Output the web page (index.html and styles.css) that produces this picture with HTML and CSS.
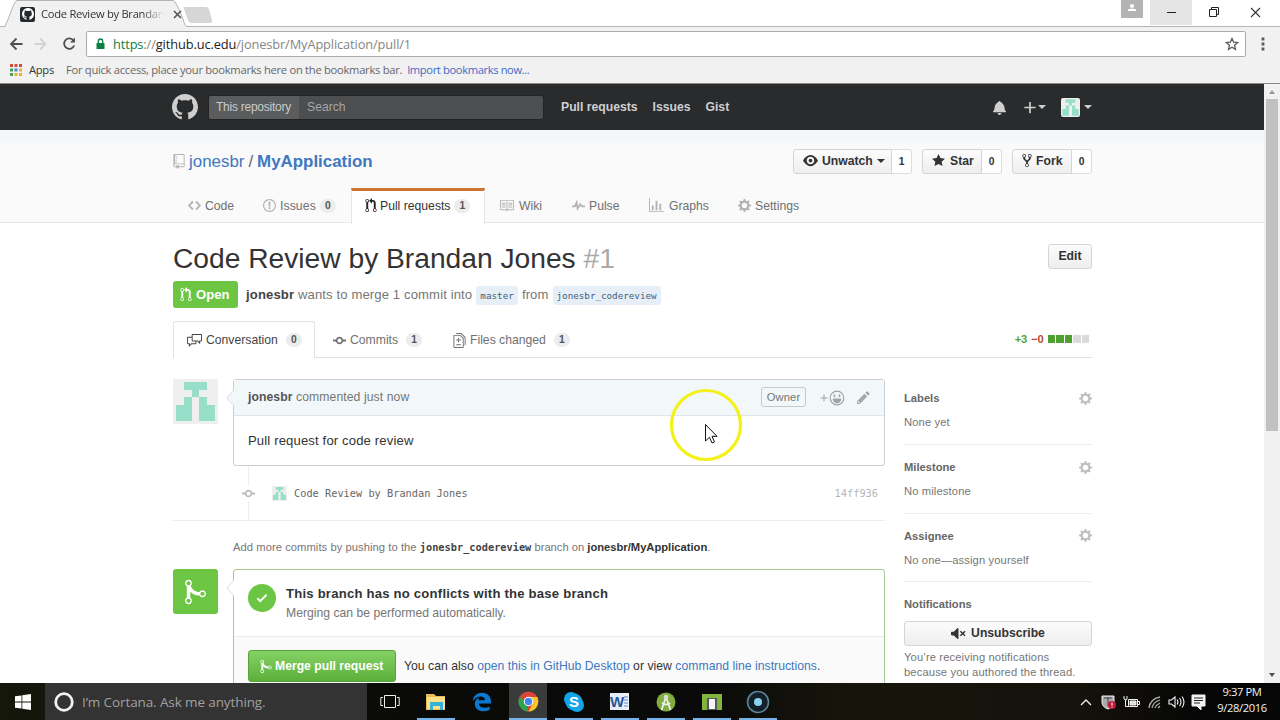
FILE: index.html
```html
<!DOCTYPE html>
<html lang="en">
<head>
<meta charset="utf-8">
<title>Code Review by Brandan Jones</title>
<link rel="stylesheet" href="styles.css">
</head>
<body>
<svg class="defs" width="0" height="0" aria-hidden="true">
  <symbol id="mark" viewBox="0 0 16 16"><path d="M8 0C3.58 0 0 3.58 0 8c0 3.54 2.29 6.53 5.47 7.59.4.07.55-.17.55-.38 0-.19-.01-.82-.01-1.49-2.01.37-2.53-.49-2.69-.94-.09-.23-.48-.94-.82-1.13-.28-.15-.68-.52-.01-.53.63-.01 1.08.58 1.23.82.72 1.21 1.87.87 2.33.66.07-.52.28-.87.51-1.07-1.78-.2-3.64-.89-3.64-3.95 0-.87.31-1.59.82-2.15-.08-.2-.36-1.02.08-2.12 0 0 .67-.21 2.2.82.64-.18 1.32-.27 2-.27.68 0 1.36.09 2 .27 1.53-1.04 2.2-.82 2.2-.82.44 1.1.16 1.92.08 2.12.51.56.82 1.27.82 2.15 0 3.07-1.87 3.75-3.65 3.95.29.25.54.73.54 1.48 0 1.07-.01 1.93-.01 2.2 0 .21.15.46.55.38A8.013 8.013 0 0 0 16 8c0-4.42-3.58-8-8-8z"/></symbol>
  <symbol id="pr" viewBox="0 0 12 16"><path d="M11 11.28V5c-.03-.78-.34-1.47-.94-2.06C9.46 2.35 8.78 2.03 8 2H7V0L4 3l3 3V4h1c.27.02.48.11.69.31.21.2.3.42.31.69v6.28A1.993 1.993 0 0 0 10 15a1.993 1.993 0 0 0 1-3.72zm-1 2.92c-.66 0-1.2-.55-1.2-1.2 0-.65.55-1.2 1.2-1.2.65 0 1.2.55 1.2 1.2 0 .65-.55 1.2-1.2 1.2zM4 3c0-1.11-.89-2-2-2a1.993 1.993 0 0 0-1 3.72v6.56A1.993 1.993 0 0 0 2 15a1.993 1.993 0 0 0 1-3.72V4.72c.59-.34 1-.98 1-1.72zm-.8 10c0 .66-.55 1.2-1.2 1.2-.65 0-1.2-.55-1.2-1.2 0-.65.55-1.2 1.2-1.2.65 0 1.2.55 1.2 1.2zM2 4.2C1.34 4.2.8 3.65.8 3c0-.65.55-1.2 1.2-1.2.65 0 1.2.55 1.2 1.2 0 .65-.55 1.2-1.2 1.2z"/></symbol>
  <symbol id="merge" viewBox="0 0 12 16"><path d="M10 7c-.73 0-1.38.41-1.73 1.02V8C7.22 7.98 6 7.64 5.14 6.98c-.75-.58-1.5-1.61-1.89-2.44A1.993 1.993 0 0 0 2 .99C.89.99 0 1.89 0 3a2 2 0 0 0 1 1.72v6.56c-.59.35-1 .99-1 1.72 0 1.11.89 2 2 2a1.993 1.993 0 0 0 1-3.72V7.67c.67.7 1.44 1.27 2.3 1.69.86.42 2.03.63 2.97.64v-.02c.36.61 1 1.02 1.73 1.02 1.11 0 2-.89 2-2 0-1.11-.89-2-2-2zm-6.8 6c0 .66-.55 1.2-1.2 1.2-.65 0-1.2-.55-1.2-1.2 0-.65.55-1.2 1.2-1.2.65 0 1.2.55 1.2 1.2zM2 4.2C1.34 4.2.8 3.65.8 3c0-.65.55-1.2 1.2-1.2.65 0 1.2.55 1.2 1.2 0 .65-.55 1.2-1.2 1.2zm8 6c-.66 0-1.2-.55-1.2-1.2 0-.65.55-1.2 1.2-1.2.65 0 1.2.55 1.2 1.2 0 .65-.55 1.2-1.2 1.2z"/></symbol>
  <symbol id="gear" viewBox="0 0 14 16"><path d="M14 8.77v-1.6l-1.94-.64-.45-1.09.88-1.84-1.13-1.13-1.81.91-1.09-.45-.69-1.92h-1.6l-.63 1.94-1.11.45-1.84-.88-1.13 1.13.91 1.81-.45 1.09L0 7.23v1.59l1.94.64.45 1.09-.88 1.84 1.13 1.13 1.81-.91 1.09.45.69 1.92h1.59l.63-1.94 1.11-.45 1.84.88 1.13-1.13-.92-1.81.47-1.09L14 8.75v.02zM7 11c-1.66 0-3-1.34-3-3s1.34-3 3-3 3 1.34 3 3-1.34 3-3 3z"/></symbol>
  <symbol id="code" viewBox="0 0 14 16"><path d="M9.5 3L8 4.5 11.5 8 8 11.5 9.5 13 14 8 9.5 3zm-5 0L0 8l4.5 5L6 11.5 2.5 8 6 4.5 4.5 3z"/></symbol>
  <symbol id="issue" viewBox="0 0 14 16"><path d="M7 2.3c3.14 0 5.7 2.56 5.7 5.7s-2.56 5.7-5.7 5.7A5.71 5.71 0 0 1 1.3 8c0-3.14 2.56-5.7 5.7-5.7zM7 1C3.14 1 0 4.14 0 8s3.14 7 7 7 7-3.14 7-7-3.14-7-7-7zm1 3H6v5h2V4zm0 6H6v2h2v-2z"/></symbol>
  <symbol id="book" viewBox="0 0 16 16"><path d="M3 5h4v1H3V5zm0 3h4V7H3v1zm0 2h4V9H3v1zm11-5h-4v1h4V5zm0 2h-4v1h4V7zm0 2h-4v1h4V9zm2-6v9c0 .55-.45 1-1 1H9.5l-1 1-1-1H2c-.55 0-1-.45-1-1V3c0-.55.45-1 1-1h5.5l1 1 1-1H15c.55 0 1 .45 1 1zm-8 .5L7.5 3H2v9h6V3.5zm7-.5H9.5l-.5.5V12h6V3z"/></symbol>
  <symbol id="pulse" viewBox="0 0 14 16"><path d="M11.5 8L8.8 5.4 6.6 8.5 5.5 1.6 2.38 8H0v2h3.6l.9-1.8.9 5.4L9 8.5l1.6 1.5H14V8z"/></symbol>
  <symbol id="graph" viewBox="0 0 16 16"><path d="M16 14v1H0V0h1v14h15zM5 13H3V8h2v5zm4 0H7V3h2v10zm4 0h-2V6h2v7z"/></symbol>
  <symbol id="eye" viewBox="0 0 16 16"><path d="M8.06 2C3 2 0 8 0 8s3 6 8.06 6C13 14 16 8 16 8s-3-6-7.94-6zM8 12c-2.2 0-4-1.78-4-4 0-2.2 1.8-4 4-4 2.22 0 4 1.8 4 4 0 2.22-1.78 4-4 4zm2-4c0 1.11-.89 2-2 2-1.11 0-2-.89-2-2 0-1.11.89-2 2-2 1.11 0 2 .89 2 2z"/></symbol>
  <symbol id="star" viewBox="0 0 14 16"><path d="M14 6l-4.9-.64L7 1 4.9 5.36 0 6l3.6 3.26L2.67 14 7 11.67 11.33 14l-.93-4.74z"/></symbol>
  <symbol id="fork" viewBox="0 0 10 16"><path d="M8 1a1.993 1.993 0 0 0-1 3.72V6L5 8 3 6V4.72A1.993 1.993 0 0 0 2 1a1.993 1.993 0 0 0-1 3.72V6.5l3 3v1.78A1.993 1.993 0 0 0 5 15a1.993 1.993 0 0 0 1-3.72V9.5l3-3V4.72A1.993 1.993 0 0 0 8 1zM2 4.2C1.34 4.2.8 3.65.8 3c0-.65.55-1.2 1.2-1.2.65 0 1.2.55 1.2 1.2 0 .65-.55 1.2-1.2 1.2zm3 10c-.66 0-1.2-.55-1.2-1.2 0-.65.55-1.2 1.2-1.2.65 0 1.2.55 1.2 1.2 0 .65-.55 1.2-1.2 1.2zm3-10c-.66 0-1.2-.55-1.2-1.2 0-.65.55-1.2 1.2-1.2.65 0 1.2.55 1.2 1.2 0 .65-.55 1.2-1.2 1.2z"/></symbol>
  <symbol id="repo" viewBox="0 0 12 16"><path d="M4 9H3V8h1v1zm0-3H3v1h1V6zm0-2H3v1h1V4zm0-2H3v1h1V2zm8-1v12c0 .55-.45 1-1 1H6v2l-1.5-1.5L3 16v-2H1c-.55 0-1-.45-1-1V1c0-.55.45-1 1-1h10c.55 0 1 .45 1 1zm-1 10H1v2h2v-1h3v1h5v-2zm0-10H2v9h9V1z"/></symbol>
  <symbol id="bell" viewBox="0 0 14 16"><path d="M14 12v1H0v-1l.73-.58c.77-.77.81-2.55 1.19-4.42C2.69 3.23 6 2 6 2c0-.55.45-1 1-1s1 .45 1 1c0 0 3.39 1.23 4.16 5 .38 1.88.42 3.66 1.19 4.42l.66.58H14zm-7 4c1.11 0 2-.89 2-2H5c0 1.11.89 2 2 2z"/></symbol>
  <symbol id="talk" viewBox="0 0 16 16"><path d="M15 1H6c-.55 0-1 .45-1 1v2H1c-.55 0-1 .45-1 1v6c0 .55.45 1 1 1h1v3l3-3h4c.55 0 1-.45 1-1V9h1l3 3V9h1c.55 0 1-.45 1-1V2c0-.55-.45-1-1-1zM9 11H4.5L3 12.5V11H1V5h4v3c0 .55.45 1 1 1h3v2zm6-3h-2v1.5L11.5 8H6V2h9v6z"/></symbol>
  <symbol id="commit" viewBox="0 0 14 16"><path d="M10.86 7c-.45-1.72-2-3-3.86-3-1.86 0-3.41 1.28-3.86 3H0v2h3.14c.45 1.72 2 3 3.86 3 1.86 0 3.41-1.28 3.86-3H14V7h-3.14zM7 10.2c-1.22 0-2.2-.98-2.2-2.2 0-1.22.98-2.2 2.2-2.2 1.22 0 2.2.98 2.2 2.2 0 1.22-.98 2.2-2.2 2.2z"/></symbol>
  <symbol id="diff" viewBox="0 0 13 16"><path d="M6 7h2v1H6v2H5V8H3V7h2V5h1v2zm-3 6h5v-1H3v1zM7.5 2L11 5.5V15c0 .55-.45 1-1 1H1c-.55 0-1-.45-1-1V3c0-.55.45-1 1-1h6.5zM10 6L7 3H1v12h9V6zM8.5 0H3v1h5l4 4v8h1V4.5L8.5 0z"/></symbol>
  <symbol id="pencil" viewBox="0 0 14 16"><path d="M0 12v3h3l8-8-3-3-8 8zm3 2H1v-2h1v1h1v1zm10.3-9.3L12 6 9 3l1.3-1.3a.996.996 0 0 1 1.41 0l1.59 1.59c.39.39.39 1.02 0 1.41z"/></symbol>
  <symbol id="mute" viewBox="0 0 16 16"><path d="M8 2.81v10.38c0 .67-.81 1-1.28.53L3 10H1c-.55 0-1-.45-1-1V7c0-.55.45-1 1-1h2l3.72-3.72C7.19 1.81 8 2.14 8 2.81zm7.53 3.22l-1.06-1.06-1.97 1.97-1.97-1.97-1.06 1.06L11.44 8 9.47 9.97l1.06 1.06 1.97-1.97 1.97 1.97 1.06-1.06L13.56 8l1.97-1.97z"/></symbol>
  <symbol id="check" viewBox="0 0 12 16"><path d="M12 5l-8 8-4-4 1.5-1.5L4 10l6.5-6.5z"/></symbol>
  <symbol id="plus" viewBox="0 0 12 16"><path d="M12 8.800H6.900V14H5.100V8.800H0V7.200h5.100V2h1.800v5.200H12z"/></symbol>
  <symbol id="identicon" viewBox="0 0 45 45"><path fill="#efefef" d="M0 0h45v45H0z"/><path fill="#98dfca" d="M11 3h23v8h-8v7h-7v-7h-8zM11 18h8v24H3V26h8zM26 18h8v8h8v16H26z"/></symbol>
</svg>

<header class="chrome">
  <div class="tabstrip">
    <svg class="tabshape" width="215" height="28" viewBox="0 0 215 28">
      <path d="M0 26.500H5Q8 20 12 9Q15 1 17 .5H173Q176 1 183 19Q185 26.500 187 26.500H215V28H0z" fill="#f1f1f1"/>
      <path d="M0 26.500H5Q8 20 12 9Q15 1 17 .5H173Q176 1 183 19Q185 26.500 187 26.500H215" fill="none" stroke="#b4b4b4"/>
      <path d="M184 7H206Q208 7 209 9L212 20Q213 23 210 23H192Q189 23 188 20L184 9Q183 7 184 7z" fill="#d6d6d6"/>
    </svg>
    <div class="tabcontent">
      <div class="favicon"><svg width="12" height="12"><use href="#mark"/></svg></div>
      <span class="tabtitle">Code Review by Brandan</span>
      <svg width="9" height="9" viewBox="0 0 9 9"><path d="M1 1l7 7M8 1L1 8" stroke="#555" stroke-width="1.600"/></svg>
    </div>
    <div class="winctl">
      <div class="user"><svg width="22" height="18" viewBox="0 0 22 18"><circle cx="11" cy="6" r="2" fill="#fff"/><path d="M7 11V10Q7 8.500 11 8.500T15 10V11z" fill="#fff"/></svg></div>
      <div class="min"><svg width="42" height="25"><path d="M17 12.500h9" stroke="#222"/></svg></div>
      <svg width="42" height="25" fill="none" stroke="#222"><path d="M17.500 9.500h7v7h-7zM19.500 9V7.500h7v7h-2"/></svg>
      <svg width="43" height="25" fill="none" stroke="#333" stroke-width="1.100"><path d="M17 8l9 9M26 8l-9 9"/></svg>
    </div>
  </div>
  <div class="toolbar">
    <svg class="nav" width="80" height="30" viewBox="0 0 80 30" fill="none" stroke-width="1.800">
      <path d="M22.500 17H11.500M16.500 11.500L11 17L16.500 22.500" stroke="#505050"/>
      <path d="M34.500 17H45M40 11.500L45.500 17L40 22.500" stroke="#d2d2d2"/>
      <path d="M73.500 13.500A5.200 5.200 0 1 0 74.200 18.500" stroke="#505050"/><path d="M75 10.500v5h-5z" fill="#505050"/>
    </svg>
    <div class="omnibox">
      <svg width="9" height="12" viewBox="0 0 9 12"><rect x=".5" y="5" width="8" height="6" rx=".5" fill="#0b8043"/><path d="M2.300 5V3.200a2.200 2.200 0 0 1 4.400 0V5" fill="none" stroke="#0b8043" stroke-width="1.300"/></svg>
      <span class="url"><b class="scheme">https</b>://<b class="host">github.uc.edu</b>/jonesbr/MyApplication/pull/1</span>
      <svg class="fav" width="14" height="14" viewBox="0 0 14 14"><path d="M7 1.500L8.600 5.200L12.700 5.600L9.600 8.300L10.500 12.300L7 10.200L3.500 12.300L4.400 8.300L1.300 5.600L5.400 5.200z" fill="none" stroke="#5a5a5a" stroke-width="1.300"/></svg>
    </div>
    <svg class="dots" width="6" height="16" viewBox="0 0 6 16"><path fill="#5a5a5a" d="M1.600 1.600h2.800v2.800H1.600zM1.600 6.600h2.800v2.800H1.600zM1.600 11.600h2.800v2.800H1.600z"/></svg>
  </div>
  <div class="bookmarks">
    <svg width="12" height="12" viewBox="0 0 12 12"><path fill="#d64b3f" d="M0 0h3v3H0zM4.500 0h3v3h-3zM9 0h3v3H9z"/><path fill="#47a35c" d="M0 4.500h3v3H0z"/><path fill="#4a86d8" d="M4.500 4.500h3v3h-3z"/><path fill="#e6b32f" d="M9 4.500h3v3H9zM4.500 9h3v3h-3zM9 9h3v3H9z"/><path fill="#47a35c" d="M0 9h3v3H0z"/></svg>
    <span class="apps">Apps</span>
    <span class="hint">For quick access, place your bookmarks here on the bookmarks bar.</span>
    <span class="import">Import bookmarks now...</span>
  </div>
</header>

<div class="viewport">
<div class="page">
  <div class="topbar"><div class="wrap topbar-in">
    <svg class="logo" width="26" height="26"><use href="#mark"/></svg>
    <div class="search"><span class="scope">This repository</span><span class="ph">Search</span></div>
    <nav class="topnav"><a class="t1">Pull requests</a><a class="t2">Issues</a><a class="t3">Gist</a></nav>
    <div class="usernav">
      <svg class="bell" width="13" height="15"><use href="#bell"/></svg>
      <svg class="plus" width="12" height="15"><use href="#plus"/></svg><i class="caret"></i>
      <svg class="face" width="19" height="19"><use href="#identicon"/></svg><i class="caret"></i>
    </div>
  </div></div>

  <div class="repohead"><div class="wrap">
    <div class="repotitle">
      <svg class="mut" width="12" height="15"><use href="#repo"/></svg>
      <h1><a class="owner">jonesbr</a><span class="slash">/</span><a class="name">MyApplication</a></h1>
      <div class="actions">
        <div class="pair"><span class="btn w1"><svg width="15" height="15"><use href="#eye"/></svg>Unwatch<i class="caret dark"></i></span><span class="cnt">1</span></div>
        <div class="pair"><span class="btn w2"><svg width="13" height="15"><use href="#star"/></svg>Star</span><span class="cnt">0</span></div>
        <div class="pair"><span class="btn w3"><svg width="10" height="15"><use href="#fork"/></svg>Fork</span><span class="cnt">0</span></div>
      </div>
    </div>
    <nav class="reponav">
      <a class="n1"><svg width="13" height="15"><use href="#code"/></svg>Code</a>
      <a class="n2"><svg width="13" height="15"><use href="#issue"/></svg>Issues<em>0</em></a>
      <a class="n3"><svg width="12" height="15"><use href="#pr"/></svg>Pull requests<em>1</em></a>
      <a class="n4"><svg width="15" height="15"><use href="#book"/></svg>Wiki</a>
      <a class="n5"><svg width="13" height="15"><use href="#pulse"/></svg>Pulse</a>
      <a class="n6"><svg width="15" height="15"><use href="#graph"/></svg>Graphs</a>
      <a class="n7"><svg width="13" height="15"><use href="#gear"/></svg>Settings</a>
    </nav>
  </div></div>

  <main class="wrap">
    <div class="titlerow"><h2><span class="ttl">Code Review by Brandan Jones</span> <span class="num">#1</span></h2><span class="btn edit">Edit</span></div>
    <div class="meta">
      <span class="state"><svg width="12" height="15"><use href="#pr"/></svg>Open</span>
      <span class="metatext"><b>jonesbr</b> wants to merge 1 commit into</span>
      <code class="ref r1">master</code><span class="from">from</span><code class="ref r2">jonesbr_codereview</code>
    </div>
    <nav class="prtabs">
      <a class="p1"><svg width="15" height="15"><use href="#talk"/></svg>Conversation<em>0</em></a>
      <a class="p2"><svg width="13" height="15"><use href="#commit"/></svg>Commits<em>1</em></a>
      <a class="p3"><svg width="13" height="15"><use href="#diff"/></svg>Files changed<em>1</em></a>
      <div class="diffstat"><b class="add">+3</b><b class="del">−0</b><span class="blocks"><i></i><i></i><i></i><i class="z"></i><i class="z"></i></span></div>
    </nav>

    <div class="cols">
      <div class="left">
        <div class="crow">
          <svg class="avatar" width="45" height="45"><use href="#identicon"/></svg>
          <div class="comment">
            <svg class="arrow" width="8" height="16" viewBox="0 0 8 16"><path d="M8 0L1 8l7 8" fill="#f2f8fa" stroke="#d5dfe4"/></svg>
            <div class="chead"><span class="who"><b>jonesbr</b> commented just now</span><span class="ownerlab">Owner</span>
              <svg class="smile" width="25" height="16" viewBox="0 0 25 16" fill="none" stroke="#9da5aa"><path d="M.5 8h7M4 4.500v7"/><circle cx="17" cy="8" r="6.800" stroke-width="1.200"/><path d="M13 9h8q-1 4-4 4t-4-4z" fill="#9da5aa"/><path d="M14.500 4.500v2.500M19.500 4.500v2.500" stroke-width="1.600"/></svg>
              <svg class="pen" width="13" height="15"><use href="#pencil"/></svg></div>
            <div class="cbody">Pull request for code review</div>
          </div>
        </div>
        <div class="commitrow">
          <div class="node"><svg width="13" height="15"><use href="#commit"/></svg></div>
          <svg class="mini" width="15" height="15"><use href="#identicon"/></svg>
          <code class="msg">Code Review by Brandan Jones</code><code class="sha">14ff936</code>
        </div>
        <p class="push"><span class="pa">Add more commits by pushing to the</span> <code>jonesbr_codereview</code> <span>branch on</span> <b>jonesbr/MyApplication</b>.</p>
        <div class="mrow">
          <div class="mergeicon"><svg width="23" height="28"><use href="#merge"/></svg></div>
          <div class="mergebox">
            <svg class="arrow" width="8" height="16" viewBox="0 0 8 16"><path d="M8 0L1 8l7 8" fill="#fff" stroke="#d3e4c9"/></svg>
            <div class="mstatus"><span class="ok"><svg width="12" height="14"><use href="#check"/></svg></span><div><h3>This branch has no conflicts with the base branch</h3><p>Merging can be performed automatically.</p></div></div>
            <div class="mact"><span class="mbtn"><svg width="12" height="15"><use href="#merge"/></svg>Merge pull request</span><span class="also">You can also <a>open this in GitHub Desktop</a> or view <a>command line instructions</a>.</span></div>
          </div>
        </div>
      </div>
      <aside>
        <section class="first"><h4>Labels<svg width="13" height="15"><use href="#gear"/></svg></h4><p>None yet</p></section>
        <section><h4>Milestone<svg width="13" height="15"><use href="#gear"/></svg></h4><p>No milestone</p></section>
        <section><h4>Assignee<svg width="13" height="15"><use href="#gear"/></svg></h4><p>No one—assign yourself</p></section>
        <section class="notif"><h4>Notifications</h4><span class="btn unsub"><svg width="15" height="15"><use href="#mute"/></svg>Unsubscribe</span><p class="why">You’re receiving notifications<br>because you authored the thread.</p></section>
      </aside>
    </div>
  </main>
</div>
<div class="scroll"><svg width="16" height="15" viewBox="0 0 16 15"><path d="M5 10l3-4 3 4z" fill="#999"/></svg><div class="thumb"></div><svg class="dn" width="16" height="15" viewBox="0 0 16 15"><path d="M5 5l3 4 3-4z" fill="#505050"/></svg></div>
</div>

<footer class="taskbar">
  <div class="start"><svg width="16" height="16" viewBox="0 0 16 16"><path fill="#fff" d="M0 2.300L6.500 1.400V7.600H0zM7.300 1.300L16 0V7.600H7.300zM0 8.400H6.500V14.600L0 13.700zM7.300 8.400H16V16L7.300 14.700z"/></svg></div>
  <div class="cortana"><svg width="20" height="20" viewBox="0 0 20 20"><circle cx="10" cy="10" r="8.300" fill="none" stroke="#f2f2f2" stroke-width="2.800"/></svg><span>I’m Cortana. Ask me anything.</span></div>
  <div class="task"><svg width="20" height="16" viewBox="0 0 20 16" fill="none" stroke="#eee"><path d="M4.500 1.500h11v12h-11zM3 3.500H.8v8H3M17 3.500h2.200v8H17"/></svg></div>
  <div class="task on"><svg width="22" height="20" viewBox="0 0 22 20"><path d="M1 2h8l2 2h9v14H1z" fill="#e9bd55"/><path d="M2 5h18v12H2z" fill="#fbe08a"/><path d="M5 10h13v8h-3v-4H8v4H5z" fill="#36b4d8"/></svg></div>
  <div class="task"><svg width="20" height="20" viewBox="0 0 20 20"><path d="M1 9C1 4 5 .8 10.300.8C15.500.8 19 4.500 19 9.500V11.500H6.800C7.200 16 13.500 17 17.500 14.500V18C11 21 2.800 19 2.800 11.800C2.800 9 4.500 6.500 7.500 5.300C6.700 6.300 6.500 7.300 6.500 8.200H13C13 3.500 5.500 2.800 1 9z" fill="#0b78d0"/></svg></div>
  <div class="task on active"><svg width="21" height="21" viewBox="0 0 21 21"><circle cx="10.500" cy="10.500" r="10" fill="#db4437"/><path d="M1.800 5.500L8 12L10.500 20.500A10 10 0 0 1 1.800 5.500z" fill="#2da24f"/><path d="M19.200 6H10.500L14.500 13L10.500 20.500A10 10 0 0 0 19.200 6z" fill="#f6c72b"/><circle cx="10.500" cy="10.500" r="4.700" fill="#fff"/><circle cx="10.500" cy="10.500" r="3.700" fill="#4285f4"/></svg></div>
  <div class="task on"><svg width="22" height="22" viewBox="0 0 22 22"><circle cx="8" cy="8" r="7" fill="#12a5e8"/><circle cx="14" cy="14" r="7" fill="#12a5e8"/><circle cx="11" cy="11" r="8.500" fill="#12a5e8"/><text x="11" y="16" text-anchor="middle" class="sk">S</text></svg></div>
  <div class="task on"><svg width="22" height="22" viewBox="0 0 22 22"><path d="M7 2h13v17H7z" fill="#eef3fa"/><path d="M15 6h4M15 9h4M15 12h4M15 15h4" stroke="#5b82c3"/><path d="M1 2h13v17H1z" fill="#e4ecf7"/><text x="8" y="16" text-anchor="middle" class="wd">W</text></svg></div>
  <div class="task on"><svg width="22" height="22" viewBox="0 0 22 22"><circle cx="11" cy="11" r="9.500" fill="#80ad3d"/><path d="M11 6L6.500 19M11 6l4.500 13M7 12q4 3 8 0" fill="none" stroke="#eee" stroke-width="1.800"/><circle cx="11" cy="6" r="2.300" fill="#dcdcdc"/></svg></div>
  <div class="task on"><svg width="22" height="22" viewBox="0 0 22 22"><path d="M1 3h20v16h-5V8H6v11H1z" fill="#82b53f"/><path d="M6 7h10v12H6z" fill="#555"/><path d="M8 8h6v10H8z" fill="#f4f4f4"/></svg></div>
  <div class="task on"><svg width="24" height="24" viewBox="0 0 24 24"><circle cx="12" cy="12" r="10.500" fill="#12202a" stroke="#5d8297" stroke-width="1.600"/><circle cx="12" cy="12" r="4" fill="#8bd1ee"/></svg></div>
  <div class="tray">
    <svg width="130" height="20" viewBox="0 0 130 20" fill="none" stroke="#f2f2f2">
      <path d="M2 13l5-5 5 5" stroke-width="1.300"/>
      <path d="M23 4h12v6q0 5-6 7q-6-2-6-7z" fill="#aaa"/><path d="M25 6h8M29 5v9" stroke="#444"/><circle cx="33" cy="13" r="4" fill="#c2183b" stroke="none"/><path d="M33 10.500v3M33 14.500v1" stroke-width="1.200"/>
      <path d="M49.500 7.500h9v7h-9zM59 9.500h1.500v3H59M45 4v3q3 2 3 0V4M46.500 8v6.500h3"/><path d="M51 9h6v4h-6z" fill="#ddd"/>
      <path d="M70 16q1-9 11-11M73 16q1-6 8-8M76 16q1-3 5-5M79 16l2-2" stroke="#aaa" stroke-width="1.300"/>
      <path d="M90 8h2.500l3.500-3v10l-3.500-3H90zM98 7.500q2 2.500 0 5M100.500 6q3 4 0 8M103 4.500q4 5.500 0 11" stroke-width="1.100"/>
      <path d="M113 3h13v11h-4v4l-4-4h-5z" fill="#f2f2f2"/><path d="M115 6h9M115 8.500h9M115 11h6" stroke="#222"/>
    </svg>
    <div class="clock"><span>9:37 PM</span><span>9/28/2016</span></div>
  </div>
</footer>

<svg class="pointer" width="76" height="76" viewBox="0 0 76 76"><circle cx="38" cy="38" r="34.500" fill="none" stroke="#f3f119" stroke-width="3.200"/><path d="M37.500 37.500v16.500l4-3.700l2.500 5.700l2.500-1l-2.500-5.700h5z" fill="#fff" stroke="#111"/></svg>
</body>
</html>
```

FILE: styles.css
```css
* { box-sizing: border-box; }
body { margin: 0; width: 1280px; height: 720px; overflow: hidden; display: flex; flex-direction: column; font: 13px/18px "Liberation Sans", Arial, sans-serif; color: #333; background: #fff; }
h1, h2, h3, h4, p { margin: 0; font-weight: normal; }
svg { display: block; flex: none; fill: currentColor; }
svg[fill="none"] { fill: none; }
span, a, b, code { white-space: nowrap; }
em, i { font-style: normal; }
.defs { position: absolute; }

/* browser chrome */
.chrome { height: 84px; flex: none; background: #f1f1f1; font-family: "Open Sans", "Noto Sans", sans-serif; border-bottom: 1px solid #888; }
.tabstrip { height: 27px; background: #fff; border-bottom: 1px solid #b4b4b4; position: relative; display: flex; }
.tabshape { position: absolute; left: 0; top: 0; }
.tabcontent { position: relative; display: flex; align-items: center; padding: 1px 0 0 20px; height: 27px; width: 200px; }
.favicon { width: 15px; height: 15px; border-radius: 2px; background: #24292e; color: #fff; display: flex; align-items: center; justify-content: center; }
.tabtitle { width: 123px; margin: 0 9px 0 6px; overflow: hidden; font-size: 11.2px; letter-spacing: -.28px; color: #333; -webkit-mask-image: linear-gradient(90deg, #000 82%, transparent); }
.winctl { margin-left: auto; display: flex; padding-right: 3px; }
.user { width: 22px; height: 18px; margin-right: 7px; background: #b3b3b3; }
.min { width: 42px; height: 25px; background: #e5e5e5; }
.toolbar { display: flex; height: 34px; }
.nav { margin-right: 6px; }
.omnibox { margin-top: 4px; width: 1160px; height: 26px; background: #fff; border: 1px solid #ababab; border-radius: 2px; display: flex; align-items: center; padding: 0 6px 0 9px; }
.url { margin-left: 8px; font-size: 12.8px; letter-spacing: -.11px; color: #858585; }
.url b { font-weight: normal; }
.url .scheme { color: #0b8043; }
.url .host { color: #222; }
.fav { margin-left: auto; }
.dots { margin: 9px 0 0 14px; }
.bookmarks { display: flex; align-items: center; height: 18px; padding-left: 10px; font-size: 11.2px; letter-spacing: -.28px; color: #666; }
.apps { color: #333; margin: 0 12px 0 7px; }
.import { color: #4569c4; margin-left: 5px; letter-spacing: -.38px; }

/* page frame */
.viewport { display: flex; height: 599px; flex: none; overflow: hidden; }
.page { width: 1264px; height: 599px; overflow: hidden; }
.scroll { width: 16px; background: #f1f1f1; display: flex; flex-direction: column; align-items: center; }
.thumb { width: 12px; height: 332px; background: #c1c1c1; }
.dn { margin-top: auto; }
.wrap { width: 919px; margin-left: 173px; }
.caret { display: inline-block; width: 0; height: 0; border: 4px solid transparent; border-top: 4px solid currentColor; border-bottom: 0; }

.topbar { height: 46px; background: #2a2b2d; color: #cfcfcf; }
.topbar-in { display: flex; align-items: center; height: 46px; }
.logo { margin: -1px 0 0 -1px; }
.search { margin-left: 10px; width: 336px; height: 25px; display: flex; background: #4c4e50; border: 1px solid #222; border-radius: 3px; line-height: 22px; font-size: 12px; overflow: hidden; }
.scope { width: 90px; padding-left: 7px; background: #5a5c5e; color: #c9cbcc; letter-spacing: -.25px; }
.ph { padding-left: 8px; color: #a4a6a8; font-size: 12.2px; }
.topnav { display: flex; font-weight: bold; font-size: 12.2px; padding: 0 0 1px 17px; gap: 15px; }
.usernav { margin-left: auto; display: flex; align-items: center; }
.plus { margin: 0 2px 0 18px; }
.face { margin: 0 4px 0 15px; border-radius: 2px; }

/* repository header */
.repohead { height: 93px; background: linear-gradient(#f5f6fa 0, #f5f6fa 11px, #fafafa 14px); border-bottom: 1px solid #e8e8e8; }
.repotitle { height: 58px; padding-top: 4px; display: flex; align-items: center; }
.repotitle h1 { display: flex; align-items: baseline; font-size: 16.9px; line-height: 20px; margin: 2px 0 0 4px; color: #4078c0; }
.slash { color: #666; margin: 0 4px; }
.name { font-weight: bold; }
.mut { color: #b5b5b5; }
.actions { margin-left: auto; display: flex; gap: 10px; }
.pair { display: flex; }
.btn { display: flex; align-items: center; height: 25px; border: 1px solid #d5d5d5; border-radius: 3px; background: linear-gradient(#fcfcfc, #eee); color: #333; font-weight: bold; font-size: 12.2px; }
.pair .btn { border-radius: 3px 0 0 3px; padding-bottom: 1px; }
.pair svg { margin-right: 4px; }
.w1 { width: 99px; padding-left: 9px; }
.w1 .caret { margin-left: 4px; }
.w2 { width: 60px; padding-left: 9px; }
.w2 svg { margin-right: 5px; }
.w3 { width: 60px; padding-left: 9px; }
.cnt { width: 20px; height: 25px; border: 1px solid #ddd; border-left: 0; border-radius: 0 3px 3px 0; background: #fff; font: bold 10.3px/24px "Liberation Sans", Arial, sans-serif; text-align: center; }
.reponav { display: flex; height: 35px; padding-left: 1px; }
.reponav a { display: flex; align-items: center; height: 35px; padding-left: 14px; color: #707070; font-size: 12.2px; }
.reponav svg { color: #b4b4b4; margin-right: 4px; }
em { display: block; min-width: 16px; height: 14px; border-radius: 8px; background: #ececec; color: #555; font: bold 10.3px/14px "Liberation Sans", Arial, sans-serif; text-align: center; }
.reponav em { margin-left: 4px; }
.n1 { width: 75px; }
.n2 { width: 102px; letter-spacing: .1px; }
.reponav .n3 { width: 134px; background: #fff; border: 1px solid #e5e5e5; border-top: 3px solid #cf7330; border-bottom: 0; padding: 0 0 4px 13px; color: #333; height: 36px; }
.reponav .n3 svg { color: #222; margin-right: 3px; }
.n4 { width: 73px; }
.n4 svg { margin-right: 5px; }
.n5 { width: 77px; }
.n6 { width: 89px; }
.n6 svg { margin-right: 5px; }

/* pull request header */
.titlerow { display: flex; justify-content: space-between; align-items: center; height: 36px; margin-top: 17px; }
h2 { font-size: 28.2px; line-height: 34px; white-space: nowrap; }
.num { color: #aaa; }
.edit { width: 44px; justify-content: center; margin-top: -3px; padding-bottom: 1px; }
.meta { display: flex; align-items: center; height: 27px; margin-top: 5px; font-size: 13.1px; color: #767676; }
.metatext { letter-spacing: .12px; }
.state { display: flex; align-items: center; width: 65px; height: 27px; background: #6cc644; border-radius: 3px; color: #fff; font-weight: bold; padding-left: 7px; margin-right: 8px; }
.state svg { margin-right: 4px; }
.meta b { color: #444; }
code { font-family: "DejaVu Sans Mono", monospace; }
.ref { background: #e6eff8; border-radius: 3px; height: 19px; padding: 0 4px; font-size: 9.3px; line-height: 19px; color: #44607a; margin-top: 2px; }
.r1 { margin-left: 4px; }
.from { margin: 0 4px; letter-spacing: .12px; }
.r2 { letter-spacing: -.04px; }
.prtabs { display: flex; align-items: center; height: 37px; margin-top: 13px; border-bottom: 1px solid #e2e2e2; font-size: 12.2px; color: #707070; }
.prtabs a { display: flex; align-items: center; height: 36px; padding-top: 2px; }
.prtabs svg { margin-right: 4px; }
.prtabs em { margin-left: 8px; }
.prtabs .p1 { width: 142px; height: 37px; margin-bottom: -1px; border: 1px solid #e2e2e2; border-bottom: 0; border-radius: 3px 3px 0 0; background: #fff; padding: 0 0 0 13px; color: #444; }
.p2 { width: 120px; padding-left: 18px; }
.p3 { padding-left: 18px; }
.diffstat { margin-left: auto; display: flex; align-items: center; gap: 4px; font-size: 11.2px; padding-right: 3px; }
.diffstat b { letter-spacing: -.2px; }
.add { color: #55a532; }
.del { color: #bd4c38; }
.blocks { display: flex; gap: 1px; }
.blocks i { width: 7.5px; height: 7.5px; background: #4fa030; }
.blocks .z { background: #dadada; }

/* discussion */
.cols { display: flex; justify-content: space-between; margin-top: 21px; }
.left { width: 712px; }
.crow, .mrow { display: flex; justify-content: space-between; }
.comment { position: relative; width: 652px; height: 87px; border: 1px solid #c9cfd2; border-radius: 3px; }
.arrow { position: absolute; left: -8px; top: 10px; }
.chead { display: flex; align-items: center; height: 36px; padding: 0 14px; background: #f2f8fa; border-bottom: 1px solid #dce6ec; color: #767676; font-size: 12.2px; }
.who { letter-spacing: .08px; margin-top: -2px; }
.chead b { color: #555; }
.ownerlab { margin: -1px 0 0 auto; width: 45px; height: 20px; border: 1px solid #c3c9cc; border-radius: 3px; font-size: 11.2px; line-height: 18px; text-align: center; letter-spacing: .1px; }
.smile { margin: 0 12px 0 14px; }
.pen { color: #a3a8ab; }
.cbody { padding: 16px 14px; font-size: 13.1px; letter-spacing: .14px; }
.commitrow { display: flex; align-items: center; height: 55px; border-bottom: 1px solid #ececec; padding-left: 69px; padding-right: 7px; }
.node { width: 13px; height: 54px; display: flex; align-items: center; background: linear-gradient(#eee, #eee) 6px 0/1px 100% no-repeat; color: #bbb; }
.node svg { background: #fff; }
.mini { margin: 0 7px 0 17px; }
.msg { font-size: 10.3px; color: #666; }
.sha { margin-left: auto; font-size: 10.3px; color: #b5b5b5; }
.push { height: 48px; padding: 17px 0 0 60px; font-size: 11.2px; color: #767676; white-space: nowrap; }
.pa { letter-spacing: .06px; }
.push code { font-weight: bold; font-size: 10.3px; color: #444; }
.push b { color: #333; }
.mergeicon { width: 45px; height: 45px; background: #6cc644; border-radius: 3px; display: flex; align-items: center; justify-content: center; color: #fff; }
.mergebox { position: relative; width: 652px; height: 140px; border: 1px solid #a5c994; border-radius: 3px; }
.mstatus { display: flex; height: 67px; padding: 14px 14px 0; border-bottom: 1px solid #ececec; color: #767676; font-size: 12.2px; }
.ok { display: flex; align-items: center; justify-content: center; width: 28px; height: 28px; border-radius: 50%; background: #6cc644; color: #fff; margin-right: 10px; }
.mstatus h3 { font-weight: bold; font-size: 13.1px; line-height: 20px; color: #333; white-space: nowrap; letter-spacing: .22px; }
.mact { display: flex; height: 73px; padding: 13px 14px 0; background: #fafafa; font-size: 12.2px; }
.mbtn { display: flex; align-items: center; width: 148px; height: 32px; border: 1px solid #5aa33c; border-radius: 3px; background: linear-gradient(#85d165, #5cb03a); color: #fff; font-weight: bold; padding-left: 11px; }
.mbtn svg { margin-right: 3px; }
.also { margin: 7px 0 0 8px; letter-spacing: .03px; }
.also a { color: #4078c0; }

/* sidebar */
aside { width: 188px; color: #767676; }
section { height: 68.5px; border-bottom: 1px solid #ececec; padding-top: 13px; }
section.first { height: 66px; padding-top: 10px; }
section h4 { display: flex; justify-content: space-between; align-items: center; height: 18px; font-weight: bold; font-size: 11.2px; color: #666; }
section h4 svg { color: #c0c0c0; }
section p { font-size: 11.2px; margin-top: 6px; letter-spacing: .13px; }
.notif { border: 0; height: auto; }
.unsub { height: 25px; margin-top: 8px; justify-content: center; padding-bottom: 1px; }
.unsub svg { margin-right: 5px; }
section .why { margin-top: 4px; line-height: 15px; }

/* taskbar */
.taskbar { display: flex; height: 37px; flex: none; background: linear-gradient(90deg, #16170b 0, #0a0b08 400px, #090a09 700px, #17150b 850px, #14120b 1080px, #060606 1200px); font-family: "Open Sans", "Noto Sans", sans-serif; color: #f2f2f2; }
.start { width: 45px; padding: 11px 0 0 15px; }
.cortana { width: 322px; background: #333; display: flex; align-items: center; padding-left: 9px; color: #a0a0a0; font-size: 13.5px; letter-spacing: -.11px; }
.cortana span { margin-left: 8px; }
.task { width: 38px; margin: 0 4px; padding-top: 2px; display: flex; align-items: center; justify-content: center; border-bottom: 2px solid transparent; }
.task.on { border-bottom-color: #76b3ea; }
.active { background: #3a3b3b; }
.sk { font: bold 15px "Liberation Sans", Arial, sans-serif; fill: #fff; }
.wd { font: bold 15px "Liberation Sans", Arial, sans-serif; fill: #2a5699; }
.tray { margin-left: auto; display: flex; align-items: center; padding-right: 10px; }
.clock { width: 56px; margin: -4px 0 0 5px; display: flex; flex-direction: column; align-items: center; font-size: 11.2px; line-height: 16px; letter-spacing: -.4px; }

.pointer { position: absolute; left: 668px; top: 387px; }
```
